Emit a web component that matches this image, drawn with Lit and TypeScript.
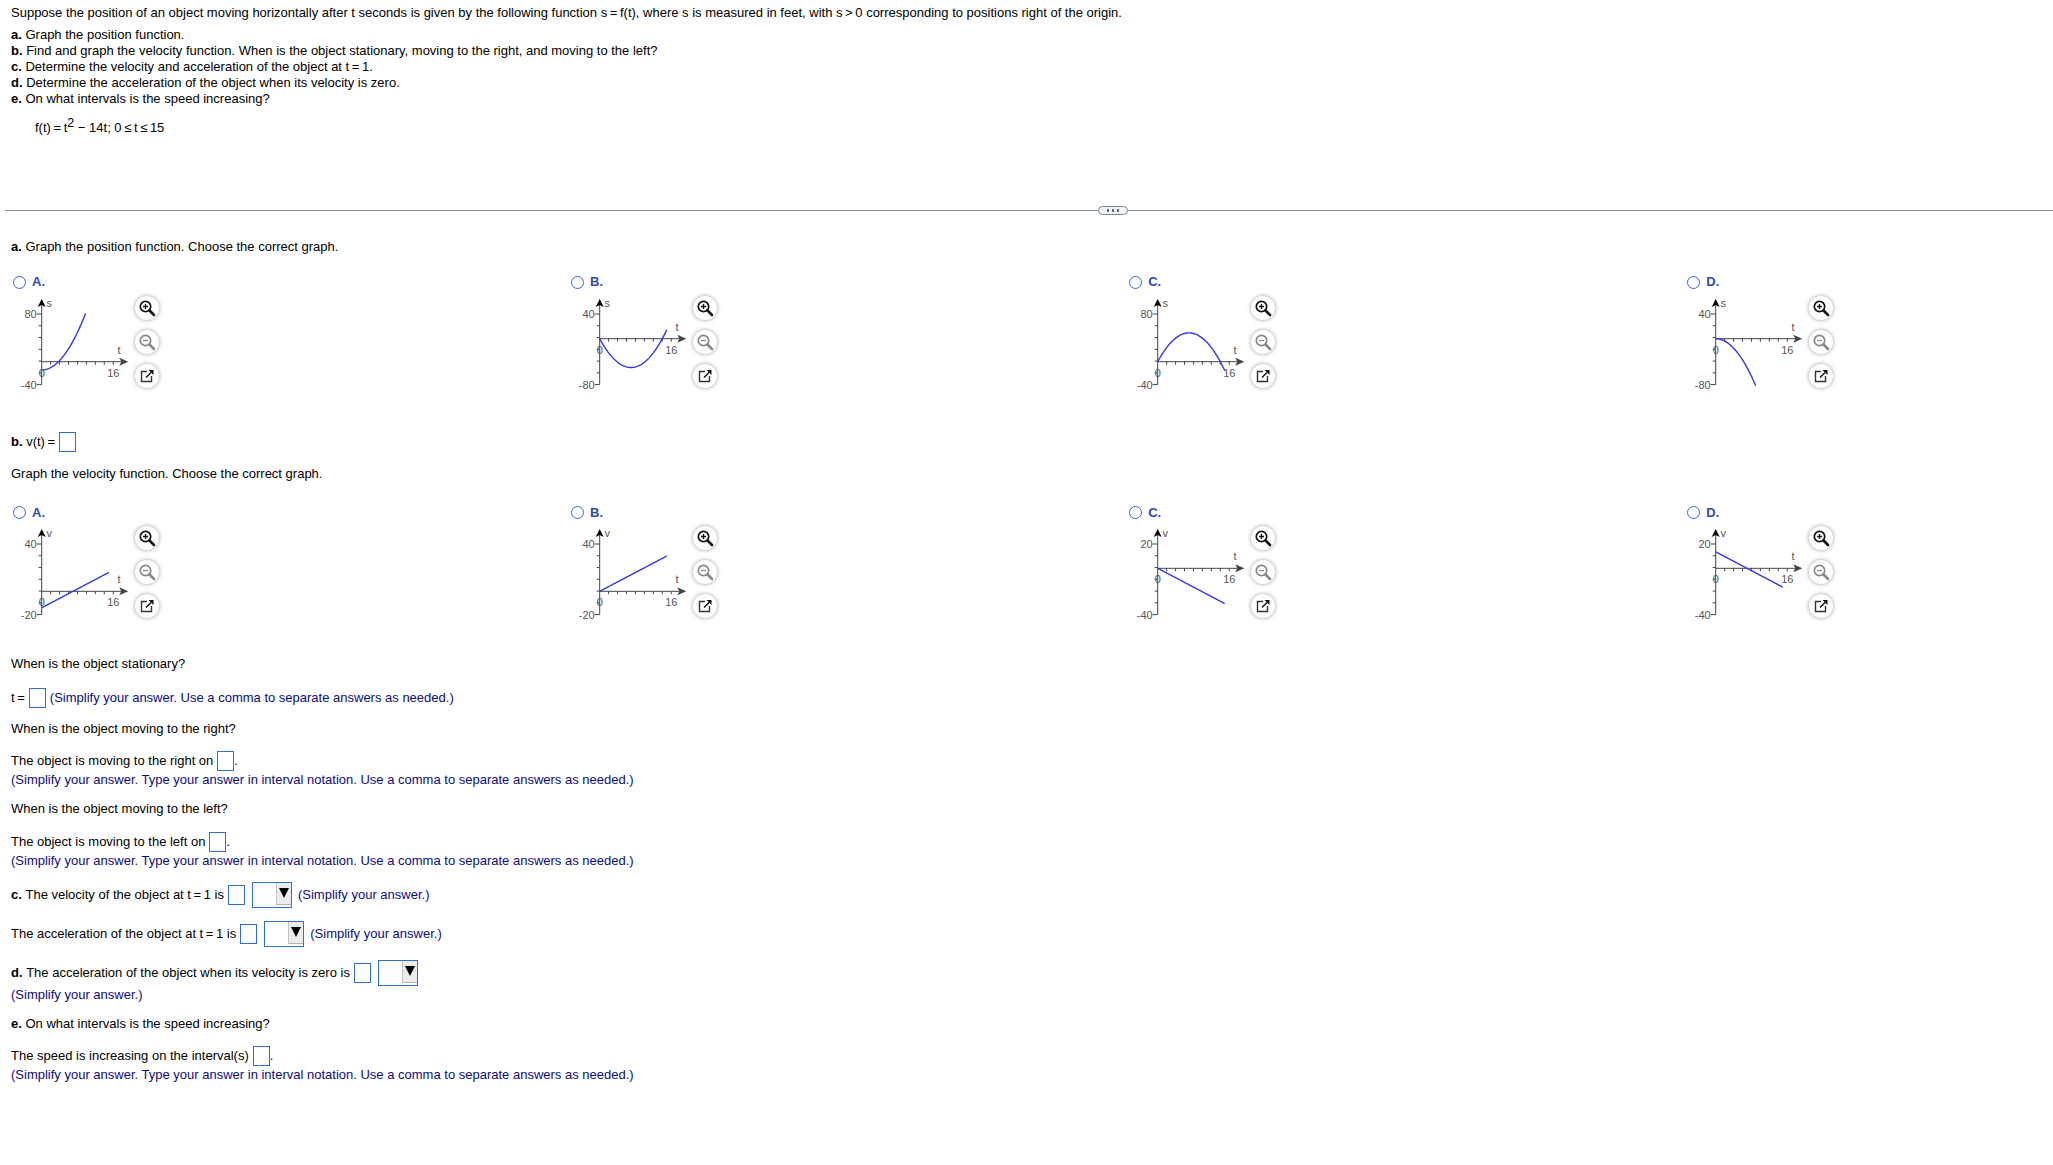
import { LitElement, html, css, svg } from "lit";
import { customElement } from "lit/decorators.js";

type G = { letter: string; axisTop: number; top: string; bottom: string; v: string; f: (t: number) => number; t0: number; t1: number; yScale: number };

const OX = 29.7, PX = 4.47, TOP = 4, TICK_TOP = 19, H = 95;

function graph(g: G) {
  const ay = g.axisTop;
  const bottomTick = TICK_TOP + 70.6;
  const pts: string[] = [];
  for (let i = 0; i <= 60; i++) {
    const t = g.t0 + ((g.t1 - g.t0) * i) / 60;
    pts.push(`${(OX + t * PX).toFixed(2)},${(ay - g.f(t) * g.yScale).toFixed(2)}`);
  }
  const xt = [];
  for (let i = 1; i <= 8; i++) xt.push(OX + i * 2 * PX);
  const yt = [];
  for (let i = 0; i <= 6; i++) yt.push(TICK_TOP + (i * 70.6) / 6);
  return html`<svg class="graph" width="123" height="${H}" viewBox="0 0 123 ${H}">
    <path class="ax" d="M${OX} ${TOP + 3}V${bottomTick}M${OX} ${ay}H${OX + 80}" />
    ${xt.map((x) => svg`<path class="ax" d="M${x} ${ay}v3" />`)}
    ${yt.map((y, i) => svg`<path class="ax" d="M${OX} ${y}h${i === 0 || i === 6 ? -5 : -3}" />`)}
    <path class="head" d="M${OX} ${TOP}l4 8l-4 -2l-4 2z" />
    <path class="headx" d="M${OX + 86.6} ${ay}l-9 -4l2 4l-2 4z" />
    <polyline class="curve" points=${pts.join(" ")} />
    <text class="lab" x=${OX - 5} y=${TICK_TOP + 4} text-anchor="end">${g.top}</text>
    <text class="lab" x=${OX - 5} y=${bottomTick + 4} text-anchor="end">${g.bottom}</text>
    <text class="lab" x=${OX + 7.6} y=${TOP + 8}  text-anchor="middle">${g.v}</text>
    <text class="lab" x=${OX + 77.3} y=${ay - 8} text-anchor="middle">t</text>
    <text class="lab" x=${OX + 71.6} y=${ay + 15} text-anchor="middle">16</text>
    <text class="lab" x=${OX} y=${ay + 15} text-anchor="middle">0</text>
  </svg>`;
}

const zoomIn = html`<svg viewBox="0 0 18 18" width="18" height="18"><circle cx="7.5" cy="7.5" r="5.2" fill="none" stroke="#111" stroke-width="1.7"/><path d="M11.5 11.5L16 16" stroke="#111" stroke-width="2.6" stroke-linecap="round"/><path d="M5 7.5h5M7.5 5v5" stroke="#111" stroke-width="1.3"/></svg>`;
const zoomOut = html`<svg viewBox="0 0 18 18" width="18" height="18"><circle cx="7.5" cy="7.5" r="5.2" fill="none" stroke="#888" stroke-width="1.7"/><path d="M11.5 11.5L16 16" stroke="#888" stroke-width="2.6" stroke-linecap="round"/><path d="M5 7.5h5" stroke="#888" stroke-width="1.3"/></svg>`;
const popOut = html`<svg viewBox="0 0 18 18" width="18" height="18"><path d="M9 4.5H3.5v10h10V9" fill="none" stroke="#333" stroke-width="1.4"/><path d="M8 10.5L13 5.5" stroke="#111" stroke-width="1.5"/><path d="M10.5 3h5v5z" fill="#111"/></svg>`;

const Y = 70.6 / 120;
const V = 70.6 / 60;
const pos: G[] = [
  { letter: "A", axisTop: 66.7, top: "80", bottom: "-40", v: "s", f: (t) => t * t - 14, t0: 0, t1: 9.8, yScale: Y },
  { letter: "B", axisTop: 43.7, top: "40", bottom: "-80", v: "s", f: (t) => t * t - 14 * t, t0: 0, t1: 15, yScale: Y },
  { letter: "C", axisTop: 66.7, top: "80", bottom: "-40", v: "s", f: (t) => 14 * t - t * t, t0: 0, t1: 15, yScale: Y },
  { letter: "D", axisTop: 43.7, top: "40", bottom: "-80", v: "s", f: (t) => -t * t, t0: 0, t1: 8.95, yScale: Y },
];
const vel: G[] = [
  { letter: "A", axisTop: 66.3, top: "40", bottom: "-20", v: "v", f: (t) => 2 * t - 14, t0: 0, t1: 15, yScale: V },
  { letter: "B", axisTop: 66.3, top: "40", bottom: "-20", v: "v", f: (t) => 2 * t, t0: 0, t1: 15, yScale: V },
  { letter: "C", axisTop: 43.3, top: "20", bottom: "-40", v: "v", f: (t) => -2 * t, t0: 0, t1: 15, yScale: V },
  { letter: "D", axisTop: 43.3, top: "20", bottom: "-40", v: "v", f: (t) => 14 - 2 * t, t0: 0, t1: 15, yScale: V },
];

@customElement("app-root")
export class AppRoot extends LitElement {
  static styles = css`
    :host { display: block; width: 2053px; height: 1165px; overflow: hidden; background: #fff; color: #000;
      font-family: "Liberation Sans", Arial, sans-serif; font-size: 13px; line-height: 16px; }
    .top { box-sizing: border-box; height: 210px; padding: 5px 0 0 11px; }
    .line { height: 16px; white-space: nowrap; display: flex; align-items: center; }
    .line b { font-weight: bold; white-space: pre; }
    .line span { white-space: pre; }
    .formula { margin: 13px 0 0 24px; }
    .formula sup { font-size: 12.5px; line-height: 0; position: relative; top: -5px; vertical-align: baseline; }
    .divider { position: relative; height: 1px; margin-left: 5px; background: #8a94a8; }
    .pill { position: absolute; left: 1093px; top: -4px; width: 28px; height: 7px; border: 1.5px solid #76849a; border-radius: 5px;
      background: #f1f3f7; display: flex; align-items: center; justify-content: center; gap: 2.5px; }
    .pill i { width: 2.5px; height: 2.5px; background: #5f6b7c; }
    .body { padding-left: 11px; }
    .hint { color: #0c0c80; }
    .hl { margin-left: 4px; }
    .box { box-sizing: border-box; width: 17px; height: 20px; margin: -2px 0 -2px 4px; border: 1px solid #2f6fce; background: #fff; flex: none; }
    .select { box-sizing: border-box; width: 40px; height: 26px; margin: -5px 6px -5px 7px; border: 1px solid #2f6fce; background: #fff; flex: none;
      display: flex; justify-content: flex-end; align-items: flex-start; }
    .select i { box-sizing: border-box; width: 15px; height: 22px; background: #ececec; border-left: 1px solid #c4c4c4; border-bottom: 1px solid #b4b4b4;
      display: flex; justify-content: center; padding-top: 5px; }
    .select i::after { content: ""; width: 0; height: 0; border-left: 5px solid transparent; border-right: 5px solid transparent; border-top: 10px solid #000; }
    .options { display: grid; grid-template-columns: 558.1px 558.1px 558.1px 1fr; margin-left: 1px; }
    .label { height: 16px; display: flex; align-items: center; gap: 6px; color: #2f49b5; font-weight: bold; font-size: 13px; }
    .radio { box-sizing: border-box; width: 13px; height: 13px; border: 1.5px solid #3f63d2; border-radius: 50%; margin-left: 1px; }
    .gr { display: flex; margin-top: 4.5px; height: 95px; }
    .graph { display: block; flex: none; }
    .icons { display: flex; flex-direction: column; gap: 10px; margin-top: 1px; }
    .icon { width: 24px; height: 24px; border-radius: 50%; background: #fff; box-shadow: 0 0 4px rgba(0, 0, 0, 0.4); display: flex; align-items: center; justify-content: center; }
    .ax { stroke: #444; stroke-width: 1; fill: none; }
    .head { fill: #000; }
    .headx { fill: #444; }
    .curve { fill: none; stroke: #3535ee; stroke-width: 1.4; }
    .lab { font: 11px "Liberation Sans", Arial, sans-serif; fill: #555; }
    .m3 { margin-top: 3px; } .m5 { margin-top: 5.5px; } .m13 { margin-top: 13px; } .m15 { margin-top: 15.5px; }
    .m16 { margin-top: 16px; } .m17 { margin-top: 17px; } .m18 { margin-top: 18px; } .m23 { margin-top: 23px; }
    .m28 { margin-top: 28px; } .m19 { margin-top: 19px; } .m35 { margin-top: 35.5px; } .m44 { margin-top: 44.3px; }
  `;

  options(gs: G[], cls: string) {
    return html`<div class="options ${cls}">
      ${gs.map((g) => html`<div>
        <div class="label"><span class="radio"></span>${g.letter}.</div>
        <div class="gr">${graph(g)}
          <div class="icons">
            <div class="icon">${zoomIn}</div>
            <div class="icon">${zoomOut}</div>
            <div class="icon">${popOut}</div>
          </div>
        </div>
      </div>`)}
    </div>`;
  }

  render() {
    const sel = html`<div class="select"><i></i></div>`;
    const box = html`<div class="box"></div>`;
    return html`
      <div class="top">
        <div class="line"><span>Suppose the position of an object moving horizontally after t seconds is given by the following function s\u2009=\u2009f(t), where s is measured in feet, with s\u2009>\u20090 corresponding to positions right of the origin.</span></div>
        <div class="line m5"><b>a. </b><span>Graph the position function.</span></div>
        <div class="line"><b>b. </b><span>Find and graph the velocity function. When is the object stationary, moving to the right, and moving to the left?</span></div>
        <div class="line"><b>c. </b><span>Determine the velocity and acceleration of the object at t\u2009=\u20091.</span></div>
        <div class="line"><b>d. </b><span>Determine the acceleration of the object when its velocity is zero.</span></div>
        <div class="line"><b>e. </b><span>On what intervals is the speed increasing?</span></div>
        <div class="line formula"><span>f(t)\u2009=\u2009t<sup>2</sup> \u2212 14t; 0\u2009\u2264\u2009t\u2009\u2264\u200915</span></div>
      </div>
      <div class="divider"><div class="pill"><i></i><i></i><i></i></div></div>
      <div class="body">
        <div class="line m28"><b>a. </b><span>Graph the position function. Choose the correct graph.</span></div>
        ${this.options(pos, "m19")}
        <div class="line m44"><b>b. </b><span>v(t)\u2009=</span>${box}</div>
        <div class="line m16"><span>Graph the velocity function. Choose the correct graph.</span></div>
        ${this.options(vel, "m23")}
        <div class="line m35"><span>When is the object stationary?</span></div>
        <div class="line m18"><span>t\u2009=</span>${box}<span class="hint hl">(Simplify your answer. Use a comma to separate answers as needed.)</span></div>
        <div class="line m15"><span>When is the object moving to the right?</span></div>
        <div class="line m16"><span>The object is moving to the right on</span>${box}<span>.</span></div>
        <div class="line m3 hint"><span>(Simplify your answer. Type your answer in interval notation. Use a comma to separate answers as needed.)</span></div>
        <div class="line m13"><span>When is the object moving to the left?</span></div>
        <div class="line m17"><span>The object is moving to the left on</span>${box}<span>.</span></div>
        <div class="line m3 hint"><span>(Simplify your answer. Type your answer in interval notation. Use a comma to separate answers as needed.)</span></div>
        <div class="line m18"><b>c. </b><span>The velocity of the object at t\u2009=\u20091 is</span>${box}${sel}<span class="hint">(Simplify your answer.)</span></div>
        <div class="line m23"><span>The acceleration of the object at t\u2009=\u20091 is</span>${box}${sel}<span class="hint">(Simplify your answer.)</span></div>
        <div class="line m23"><b>d. </b><span>The acceleration of the object when its velocity is zero is</span>${box}${sel}</div>
        <div class="line m5 hint"><span>(Simplify your answer.)</span></div>
        <div class="line m13"><b>e. </b><span>On what intervals is the speed increasing?</span></div>
        <div class="line m16"><span>The speed is increasing on the interval(s)</span>${box}<span>.</span></div>
        <div class="line m3 hint"><span>(Simplify your answer. Type your answer in interval notation. Use a comma to separate answers as needed.)</span></div>
      </div>
    `;
  }
}
